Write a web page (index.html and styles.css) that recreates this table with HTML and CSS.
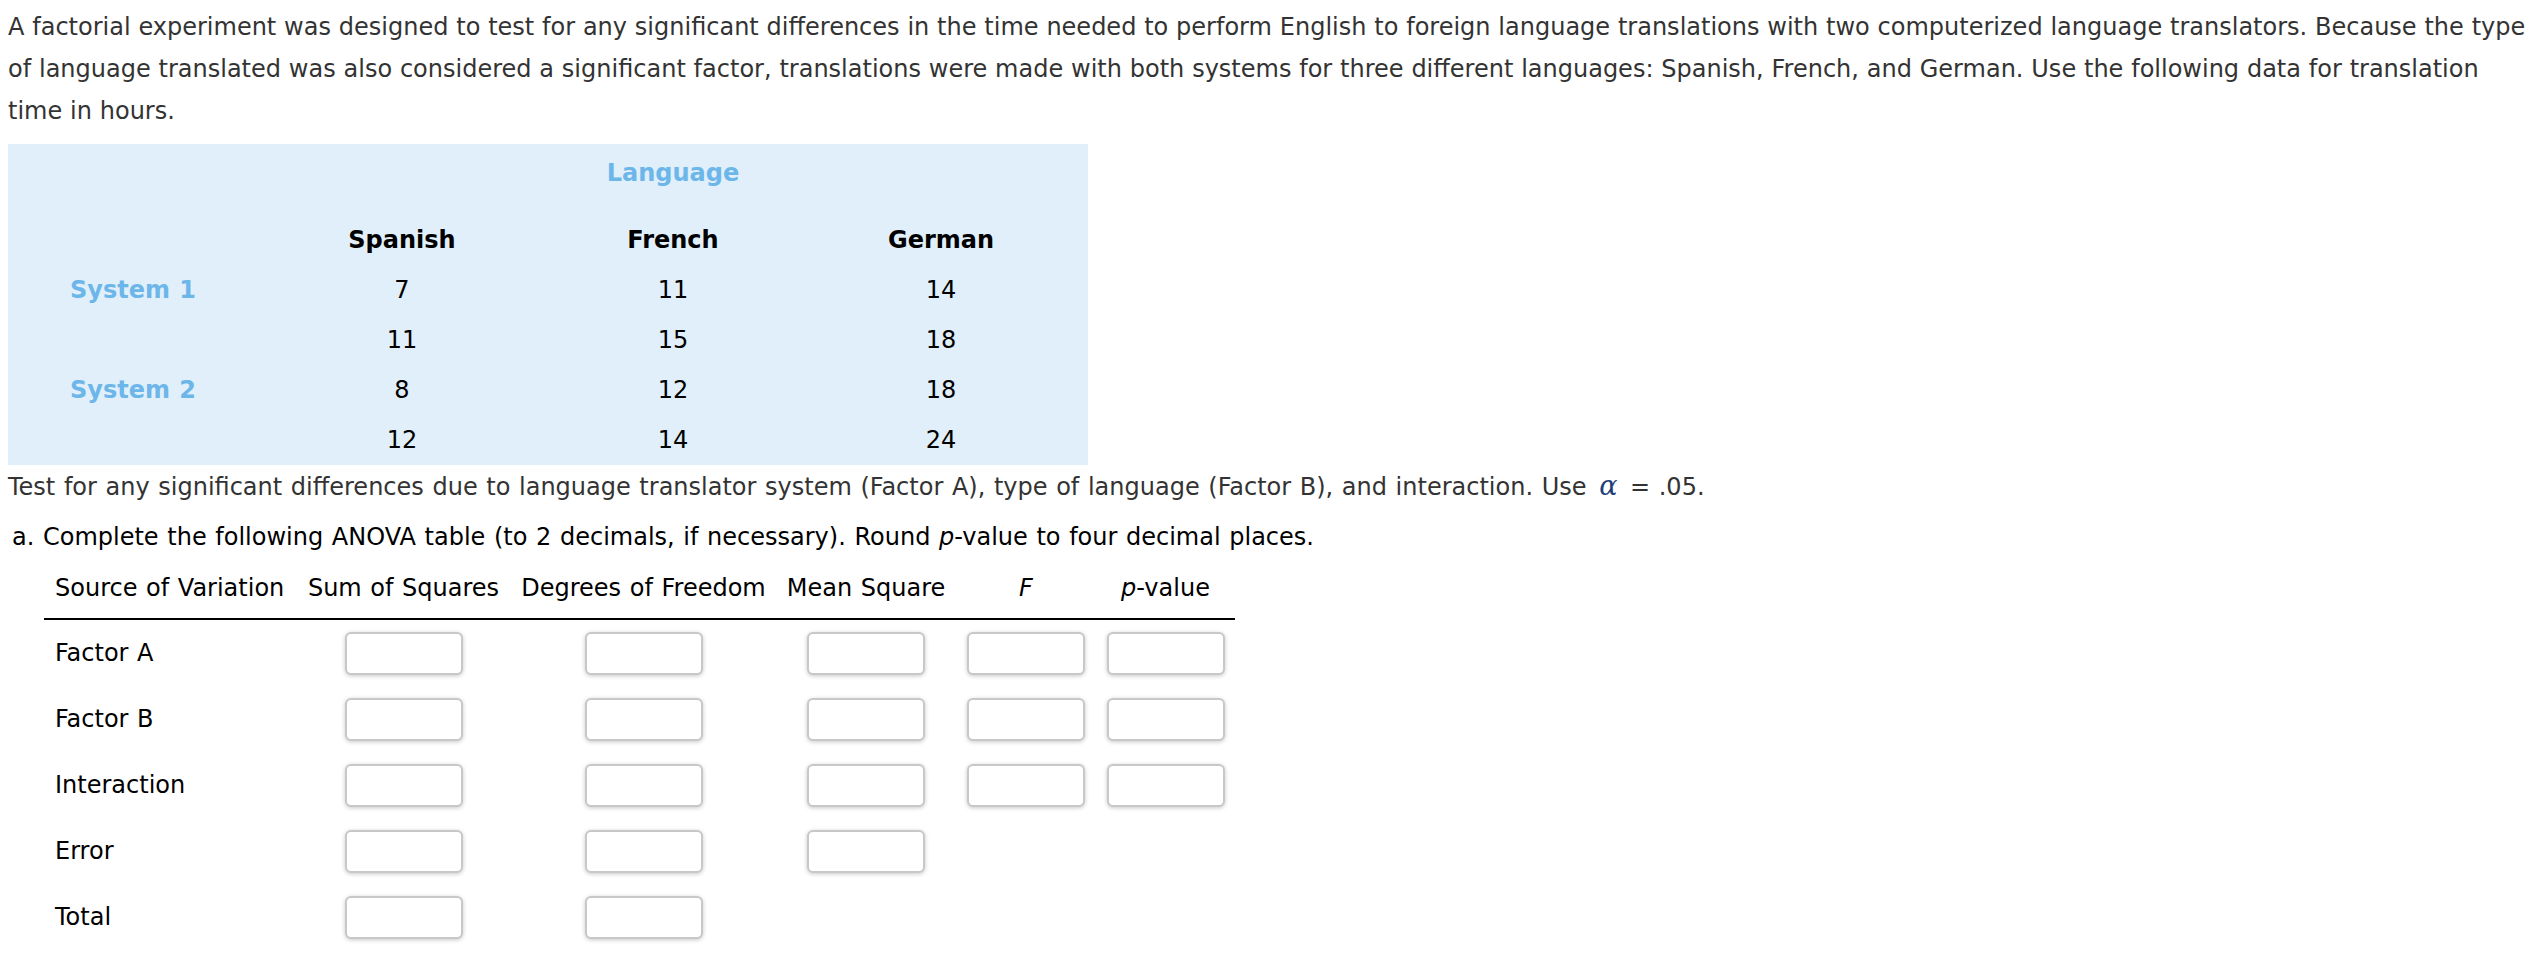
FILE: index.html
```html
<!DOCTYPE html>
<html>
<head>
<meta charset="utf-8">
<link rel="stylesheet" href="styles.css">
</head>
<body>
<p class="intro">A factorial experiment was designed to test for any significant differences in the time needed to perform English to foreign language translations with two computerized language translators. Because the type<br>of language translated was also considered a significant factor, translations were made with both systems for three different languages: Spanish, French, and German. Use the following data for translation<br>time in hours.</p>

<div class="data">
  <div class="cell"></div><div class="cell"></div><div class="cell lang">Language</div><div class="cell"></div>
  <div class="cell"></div><div class="cell hd">Spanish</div><div class="cell hd">French</div><div class="cell hd">German</div>
  <div class="cell sys">System 1</div><div class="cell">7</div><div class="cell">11</div><div class="cell">14</div>
  <div class="cell"></div><div class="cell">11</div><div class="cell">15</div><div class="cell">18</div>
  <div class="cell sys">System 2</div><div class="cell">8</div><div class="cell">12</div><div class="cell">18</div>
  <div class="cell"></div><div class="cell">12</div><div class="cell">14</div><div class="cell">24</div>
</div>

<p class="test">Test for any significant differences due to language translator system (Factor A), type of language (Factor B), and interaction. Use <span class="math">α</span> = .05.</p>

<p class="part">a. Complete the following ANOVA table (to 2 decimals, if necessary). Round <i>p</i>-value to four decimal places.</p>

<div class="anova">
  <div class="th first">Source of Variation</div>
  <div class="th">Sum of Squares</div>
  <div class="th">Degrees of Freedom</div>
  <div class="th">Mean Square</div>
  <div class="th"><i>F</i></div>
  <div class="th"><i>p</i>-value</div>

  <div class="td first">Factor A</div>
  <div class="td"><input class="ans" type="text"></div>
  <div class="td"><input class="ans" type="text"></div>
  <div class="td"><input class="ans" type="text"></div>
  <div class="td"><input class="ans" type="text"></div>
  <div class="td"><input class="ans" type="text"></div>

  <div class="td first">Factor B</div>
  <div class="td"><input class="ans" type="text"></div>
  <div class="td"><input class="ans" type="text"></div>
  <div class="td"><input class="ans" type="text"></div>
  <div class="td"><input class="ans" type="text"></div>
  <div class="td"><input class="ans" type="text"></div>

  <div class="td first">Interaction</div>
  <div class="td"><input class="ans" type="text"></div>
  <div class="td"><input class="ans" type="text"></div>
  <div class="td"><input class="ans" type="text"></div>
  <div class="td"><input class="ans" type="text"></div>
  <div class="td"><input class="ans" type="text"></div>

  <div class="td first">Error</div>
  <div class="td"><input class="ans" type="text"></div>
  <div class="td"><input class="ans" type="text"></div>
  <div class="td"><input class="ans" type="text"></div>
  <div class="td"></div>
  <div class="td"></div>

  <div class="td first">Total</div>
  <div class="td"><input class="ans" type="text"></div>
  <div class="td"><input class="ans" type="text"></div>
  <div class="td"></div>
  <div class="td"></div>
  <div class="td"></div>
</div>
</body>
</html>
```

FILE: styles.css
```css
html, body {
  margin: 0;
  background: #fff;
  overflow: hidden;
}
body {
  padding: 6px 8px 0 8px;
  font-family: "DejaVu Sans", Verdana, sans-serif;
  font-size: 24px;
  line-height: 42px;
  color: #333;
  word-spacing: 1px;
}
.intro {
  margin: 0;
  white-space: nowrap;
  word-spacing: 0.2px;
}
.data {
  margin-top: 12px;
  width: 1080px;
  padding-top: 4px;
  background: #e0eff9;
  display: grid;
  grid-template-columns: 250px 288px 254px 282px;
  grid-template-rows: 67px repeat(5, 50px);
  color: #000;
}
.cell {
  line-height: 50px;
  text-align: center;
  white-space: nowrap;
}
.lang, .sys {
  color: #6cb6ea;
  font-weight: bold;
}
.hd {
  font-weight: bold;
}
.test {
  margin: 0;
  white-space: nowrap;
}
.math {
  font-family: "DejaVu Serif", serif;
  font-style: italic;
  font-size: 27px;
  color: #1f3f7a;
  padding: 0 4px;
}
.part {
  margin: 8px 0 0 4px;
  color: #000;
  white-space: nowrap;
}
.anova {
  margin: 9px 0 0 36px;
  display: grid;
  grid-template-columns: 252px 215px 265px 180px 140px 139px;
  grid-auto-rows: 66px;
  grid-template-rows: 53px;
  width: 1191px;
  color: #000;
}
.th {
  line-height: 42px;
  padding-bottom: 9px;
  border-bottom: 2px solid #000;
  text-align: center;
  white-space: nowrap;
}
.th.first, .td.first {
  text-align: left;
  padding-left: 11px;
}
.td {
  display: flex;
  align-items: center;
  justify-content: center;
}
.td.first {
  justify-content: flex-start;
}
.ans {
  box-sizing: border-box;
  width: 118px;
  height: 43px;
  margin: 0;
  border: 2px solid #c8c8c8;
  border-radius: 6px;
  background: #fff;
  box-shadow: 0 1px 4px rgba(0, 0, 0, 0.22);
  outline: none;
}
```
